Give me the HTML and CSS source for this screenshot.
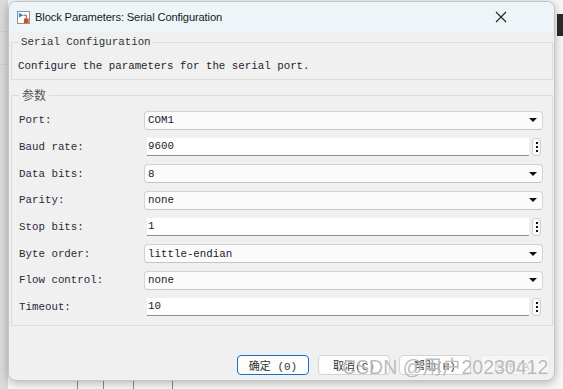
FILE: index.html
```html
<!DOCTYPE html>
<html lang="zh">
<head>
<meta charset="utf-8">
<title>Block Parameters: Serial Configuration</title>
<link rel="stylesheet" href="styles.css">
</head>
<body>
<div class="desk">
  <div class="dialog">
    <div class="titlebar">
      <svg class="app-icon" width="13" height="13" viewBox="0 0 14 14">
        <rect x="0.5" y="0.5" width="13" height="13" fill="#fff" stroke="#8a8a8a"/>
        <path d="M2 2 L7 4.5 L2 7 Z" fill="#1c8fd6"/>
        <path d="M7 4.5 H10 V8" fill="none" stroke="#555" stroke-width="1"/>
        <rect x="7.5" y="8" width="5" height="5" fill="#d94a1e"/>
      </svg>
      <span class="title">Block Parameters: Serial Configuration</span>
      <svg class="close" width="12" height="12" viewBox="0 0 12 12">
        <path d="M1 1 L11 11 M11 1 L1 11" stroke="#222" stroke-width="1.1"/>
      </svg>
    </div>
    <div class="body">
      <fieldset class="group desc-group">
        <legend>Serial Configuration</legend>
        <p class="desc">Configure the parameters for the serial port.</p>
      </fieldset>
      <fieldset class="group params">
        <legend class="cjk-legend">参数</legend>
        <div class="rows">
          <label>Port:</label>
          <div class="select"><span>COM1</span><i class="arrow"></i></div>
          <label>Baud rate:</label>
          <div class="edit"><div class="input">9600</div><div class="dots"><b></b><b></b><b></b></div></div>
          <label>Data bits:</label>
          <div class="select"><span>8</span><i class="arrow"></i></div>
          <label>Parity:</label>
          <div class="select"><span>none</span><i class="arrow"></i></div>
          <label>Stop bits:</label>
          <div class="edit"><div class="input">1</div><div class="dots"><b></b><b></b><b></b></div></div>
          <label>Byte order:</label>
          <div class="select"><span>little-endian</span><i class="arrow"></i></div>
          <label>Flow control:</label>
          <div class="select"><span>none</span><i class="arrow"></i></div>
          <label>Timeout:</label>
          <div class="edit"><div class="input">10</div><div class="dots"><b></b><b></b><b></b></div></div>
        </div>
      </fieldset>
      <div class="buttons">
        <button class="btn primary">确定 (0)</button>
        <button class="btn">取消(C)</button>
        <button class="btn">帮助(H)</button>
        <button class="btn disabled">应用(A)</button>
      </div>
    </div>
  </div>
  <div class="watermark">CSDN @用户20230412</div>
</div>
</body>
</html>
```
FILE: styles.css
```css
html, body {
  margin: 0;
  padding: 0;
}
body {
  width: 563px;
  height: 389px;
  overflow: hidden;
  background: #f7f7f7;
}
.desk {
  position: relative;
  height: 389px;
  background:
    linear-gradient(#cfcfcf, #cfcfcf) 0 31px / 8px 1px no-repeat,
    linear-gradient(#cfcfcf, #cfcfcf) 0 64px / 8px 1px no-repeat,
    linear-gradient(#dadada, #dadada) 0 0 / 8px 389px no-repeat,
    linear-gradient(#2b2b2b, #2b2b2b) 557px 14px / 6px 22px no-repeat,
    linear-gradient(#8a8a8a, #8a8a8a) 77px 381px / 1px 8px no-repeat,
    linear-gradient(#8a8a8a, #8a8a8a) 103px 381px / 1px 8px no-repeat,
    linear-gradient(#8a8a8a, #8a8a8a) 133px 381px / 1px 8px no-repeat,
    linear-gradient(#8a8a8a, #8a8a8a) 172px 381px / 1px 8px no-repeat,
    #f7f7f7;
  padding: 1px 0 0 8px;
  box-sizing: border-box;
}
.dialog {
  width: 547px;
  height: 380px;
  box-sizing: border-box;
  border: 1px solid #c4c4c4;
  border-radius: 8px;
  background: #f0f0f0;
  box-shadow: 0 2px 10px rgba(0,0,0,0.28);
  overflow: hidden;
  display: flex;
  flex-direction: column;
}
.titlebar {
  height: 29px;
  flex: none;
  background: #eef5f8;
  display: flex;
  align-items: center;
  padding-left: 8px;
  padding-right: 47px;
}
.app-icon {
  flex: none;
  margin-top: 1px;
}
.title {
  margin-left: 5px;
  font-family: "Liberation Sans", Arial, sans-serif;
  font-size: 11.2px;
  letter-spacing: -0.15px;
  color: #1a1a1a;
  flex: 1;
}
.close {
  flex: none;
  margin-top: 1px;
}
.body {
  flex: 1;
  padding: 5px 1px 0 2px;
  display: flex;
  flex-direction: column;
}
.group {
  margin: 0;
  border: 1px solid #dcdcdc;
  padding: 0 9px 0 7px;
  min-width: 0;
}
.group legend {
  font-family: "Liberation Mono", monospace;
  font-size: 10.8px;
  line-height: 13px;
  color: #333;
  padding: 0 2px;
  margin-left: 0;
}
.desc-group {
  padding-top: 10px;
  padding-bottom: 6px;
}
.desc {
  margin: 0;
  font-family: "Liberation Mono", monospace;
  font-size: 10.8px;
  line-height: 14px;
  color: #1e1e2e;
  margin-left: -1px;
}
.params {
  margin-top: 8px;
  padding-top: 5px;
  padding-bottom: 5px;
}
.params legend.cjk-legend {
  font-family: "Noto Sans CJK SC", sans-serif;
  font-size: 12px;
  line-height: 14px;
  color: #555;
  padding: 0 3px;
  margin-left: 0;
}
.rows {
  display: grid;
  grid-template-columns: 125px 1fr;
  grid-auto-rows: 26.67px;
  align-items: center;
}
.rows label {
  font-family: "Liberation Mono", monospace;
  font-size: 10.8px;
  color: #2a2a3a;
}
.select {
  height: 19px;
  box-sizing: border-box;
  border: 1px solid #d2d2d2;
  border-bottom-color: #c4c4c4;
  border-radius: 4px;
  background: #fbfbfb;
  display: flex;
  align-items: center;
  padding: 0 5px 0 3px;
  font-family: "Liberation Mono", monospace;
  font-size: 10.8px;
  color: #1a1a2a;
}
.select span {
  flex: 1;
}
.arrow {
  width: 0;
  height: 0;
  border-left: 4px solid transparent;
  border-right: 4px solid transparent;
  border-top: 4px solid #111;
}
.edit {
  display: flex;
  align-items: center;
  gap: 3px;
  padding-left: 3px;
}
.input {
  flex: 1;
  height: 18px;
  box-sizing: border-box;
  background: #fff;
  border-bottom: 1.5px solid #8f8f8f;
  padding-left: 1px;
  font-family: "Liberation Mono", monospace;
  font-size: 10.8px;
  line-height: 17px;
  color: #1a1a2a;
}
.dots {
  width: 9px;
  height: 18px;
  box-sizing: border-box;
  border: 1px solid #d0d0d0;
  border-radius: 3px;
  background: #fbfbfb;
  display: flex;
  flex-direction: column;
  align-items: center;
  justify-content: center;
  gap: 2px;
  margin-right: 2px;
}
.dots b {
  width: 2px;
  height: 2px;
  background: #111;
}
.buttons {
  margin-top: 29px;
  display: flex;
  justify-content: flex-end;
  gap: 9px;
  padding-right: 3px;
}
.btn {
  width: 72px;
  height: 20px;
  box-sizing: border-box;
  border: 1px solid #d3d3d3;
  border-radius: 4px;
  background: #fdfdfd;
  font-family: "Liberation Mono", "Noto Sans CJK SC", monospace;
  font-size: 11px;
  color: #333;
  padding: 0;
}
.btn.primary {
  border: 1.5px solid #1a6fc4;
}
.btn.disabled {
  width: 70px;
  color: #c9c9c9;
  border-color: #ebebeb;
  background: #f6f6f6;
}
.watermark {
  position: absolute;
  left: 342px;
  top: 355px;
  font-family: "Liberation Sans", "Noto Sans CJK SC", sans-serif;
  font-size: 19.5px;
  line-height: 24px;
  color: rgba(120,120,120,0.5);
  text-shadow: 0 0 1px #fff;
  white-space: nowrap;
  pointer-events: none;
}
```
